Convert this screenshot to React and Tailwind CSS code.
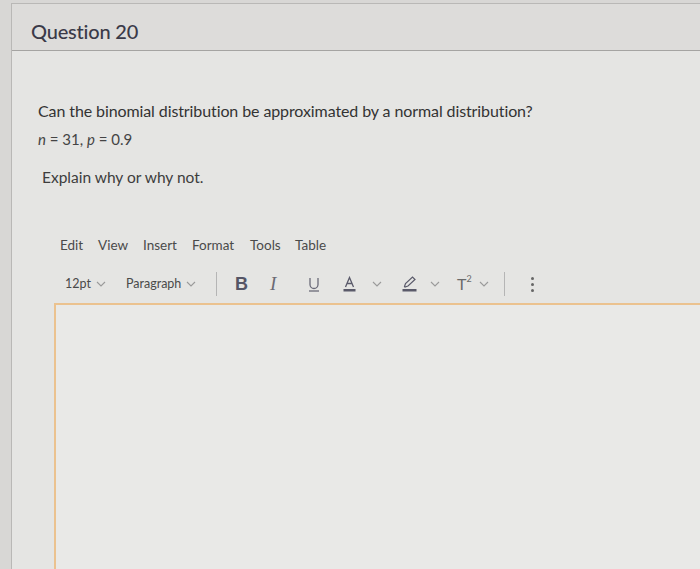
import React from "react";

const Chev = ({ ml = 5 }) => (
  <svg width="10" height="6" viewBox="0 0 10 6" style={{ marginLeft: ml }} fill="none" stroke="#9a9a9a" strokeWidth="1.1">
    <path d="M1 1l4 4 4-4" />
  </svg>
);

export default function App() {
  return (
    <div className="w-[700px] h-[569px] overflow-hidden bg-[#d8d7d5] pl-[11px] pt-[3px]" style={{ fontFamily: "Lato, 'Open Sans', sans-serif" }}>
      <div className="h-full border-l border-t border-[#b9b8b6] bg-[#e5e5e3]">
        <div className="h-[47px] bg-[#dddcda] border-b border-[#a5a4a2] flex items-center pl-[19px] pt-[8px]">
          <span className="text-[20px] text-[#3a3a48] font-medium tracking-[-0.2px]">Question 20</span>
        </div>
        <div className="pl-[26px] pt-[50px]">
          <p className="text-[16px] leading-[20px] text-[#333] tracking-[-0.1px]">Can the binomial distribution be approximated by a normal distribution?</p>
          <p className="text-[15px] leading-[18px] text-[#444] mt-[9px]">
            <span className="italic">n</span> = 31, <span className="italic">p</span> = 0.9
          </p>
          <p className="text-[15.5px] leading-[20px] text-[#3d3d3d] mt-[19px] pl-[4px]">Explain why or why not.</p>

          <div className="pl-[22px] mt-[49px]">
            <div className="flex text-[13.5px] leading-[18px] text-[#4a4a4a]">
              <span className="w-[38px]">Edit</span>
              <span className="w-[45px]">View</span>
              <span className="w-[49px]">Insert</span>
              <span className="w-[58px]">Format</span>
              <span className="w-[45px]">Tools</span>
              <span>Table</span>
            </div>
            <div className="flex items-center mt-[19px] h-[22px] text-[12.5px] text-[#4a4a4a] pl-[5px]">
              <span className="w-[61px] flex items-center">12pt<Chev /></span>
              <span className="w-[90px] flex items-center">Paragraph<Chev /></span>
              <span className="w-px h-[24px] bg-[#b5b5b5]" />
              <span className="ml-[18px] w-[35px] text-[18px] leading-[20px] font-bold text-[#555566]" style={{ fontFamily: "'Liberation Sans', Arial, sans-serif" }}>B</span>
              <span className="w-[38px] text-[19px] leading-[20px] italic text-[#6a6a74]" style={{ fontFamily: "'Liberation Serif', serif" }}>I</span>
              <span className="w-[35px] flex items-center">
                <svg width="12" height="15" viewBox="0 0 12 15" fill="none" stroke="#6a6a78" strokeWidth="1.3">
                  <path d="M2 1v6.5a4 4 0 008 0V1" />
                  <path d="M1 14h10" />
                </svg>
              </span>
              <span className="w-[59px] flex items-center">
                <svg width="13" height="16" viewBox="0 0 13 16" fill="none">
                  <path d="M2.5 11L6.5 1.5 10.5 11M4 7.5h5" stroke="#5a5a6a" strokeWidth="1.3" />
                  <rect x="0.5" y="13" width="12" height="2.5" fill="#5a5a6a" />
                </svg>
                <Chev ml={16} />
              </span>
              <span className="w-[55px] flex items-center">
                <svg width="15" height="16" viewBox="0 0 15 16" fill="none">
                  <path d="M2.5 10.5l1-3L10.5 1 13 3.5l-7 6.5-3 1z" stroke="#5a5a6a" strokeWidth="1.2" />
                  <rect x="0.5" y="13" width="14" height="2.5" fill="#5a5a6a" />
                </svg>
                <Chev ml={13} />
              </span>
              <span className="w-[47px] flex items-center text-[16px] text-[#6a6a6a]">T<sup className="text-[9px] -mt-[2px]">2</sup><Chev ml={7} /></span>
              <span className="w-px h-[24px] bg-[#b5b5b5]" />
              <span className="ml-[26px] flex flex-col gap-[3px]">
                <span className="w-[3px] h-[3px] rounded-full bg-[#666]" />
                <span className="w-[3px] h-[3px] rounded-full bg-[#666]" />
                <span className="w-[3px] h-[3px] rounded-full bg-[#666]" />
              </span>
            </div>
          </div>
          <div className="ml-[16px] mt-[8px] h-[300px] border-t-2 border-l-2 border-[#ebc28f] bg-[#e9e9e7]" />
        </div>
      </div>
    </div>
  );
}
